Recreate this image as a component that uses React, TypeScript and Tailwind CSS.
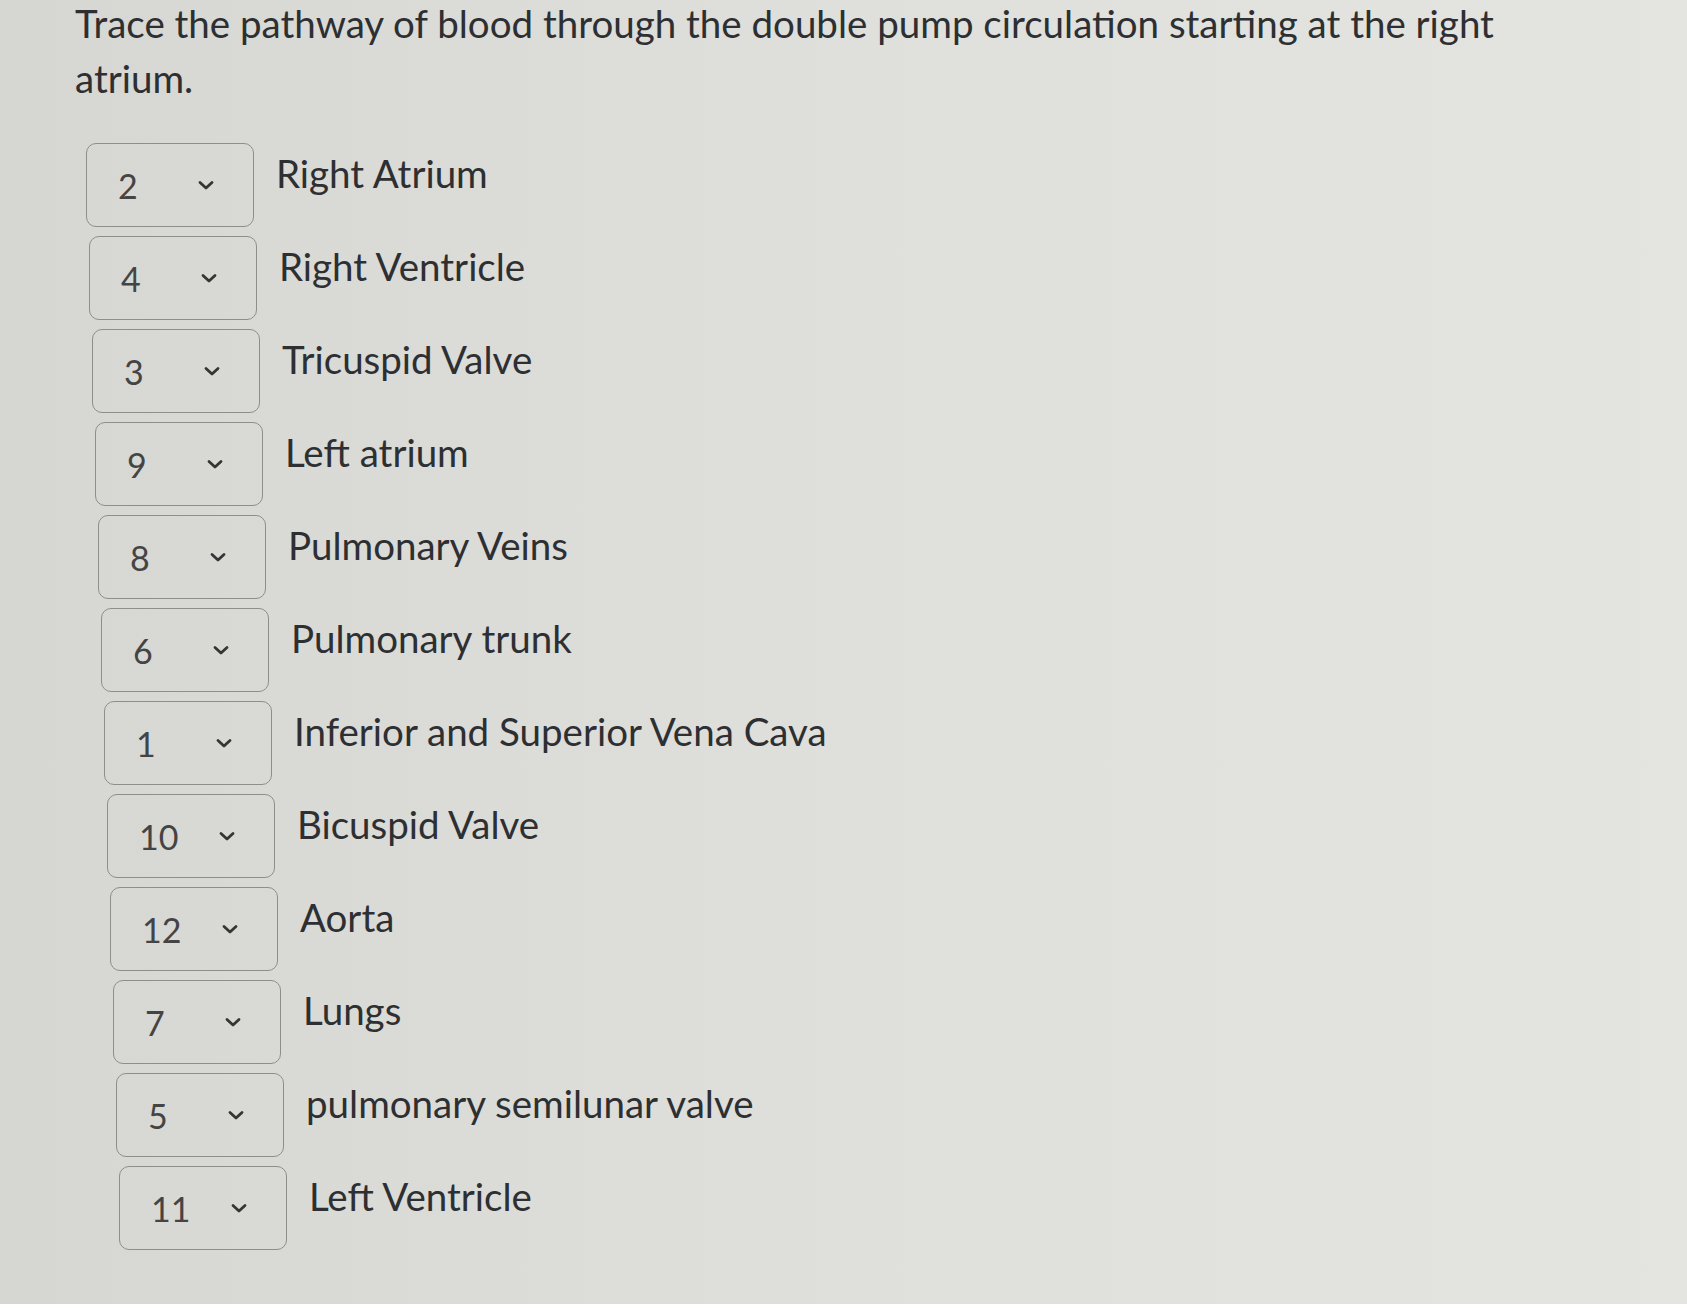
const rows = [
  { value: "2", label: "Right Atrium" },
  { value: "4", label: "Right Ventricle" },
  { value: "3", label: "Tricuspid Valve" },
  { value: "9", label: "Left atrium" },
  { value: "8", label: "Pulmonary Veins" },
  { value: "6", label: "Pulmonary trunk" },
  { value: "1", label: "Inferior and Superior Vena Cava" },
  { value: "10", label: "Bicuspid Valve" },
  { value: "12", label: "Aorta" },
  { value: "7", label: "Lungs" },
  { value: "5", label: "pulmonary semilunar valve" },
  { value: "11", label: "Left Ventricle" },
];

function Chevron() {
  return (
    <svg width="18" height="12" viewBox="0 0 18 12" fill="none" className="shrink-0">
      <path d="M3 3.5l6 5.5 6-5.5" stroke="#353535" strokeWidth="2.8" strokeLinecap="round" strokeLinejoin="round" />
    </svg>
  );
}

function OrderSelect({ value }: { value: string }) {
  return (
    <div className="flex h-[84px] w-[168px] shrink-0 items-center justify-between rounded-[10px] border-[1.5px] border-[#8e8e8b] pl-[31px] pr-[38px]">
      <span className="text-[34px] text-[#444]">{value}</span>
      <Chevron />
    </div>
  );
}

export default function App() {
  return (
    <div className="min-h-[1308px] w-full bg-gradient-to-r from-[#d6d6d2] via-[#dfdfdb] to-[#e4e4e1] font-['Lato','Liberation_Sans',sans-serif] text-[#2d2f32]">
      <div className="pl-[75px]">
        <h1 className="-mt-[4px] w-[1470px] text-[38.5px] leading-[55px] font-normal">
          Trace the pathway of blood through the double pump circulation starting at the right atrium.
        </h1>

        <div className="mt-[37px] ml-[11px] flex flex-col gap-[9px]">
          {rows.map((row, i) => (
            <div key={row.value} className="flex items-start gap-[22px]" style={{ marginLeft: i * 3 }}>
              <OrderSelect value={row.value} />
              <p className="mt-[8px] text-[38.5px] leading-[44px]">{row.label}</p>
            </div>
          ))}
        </div>
      </div>
    </div>
  );
}
